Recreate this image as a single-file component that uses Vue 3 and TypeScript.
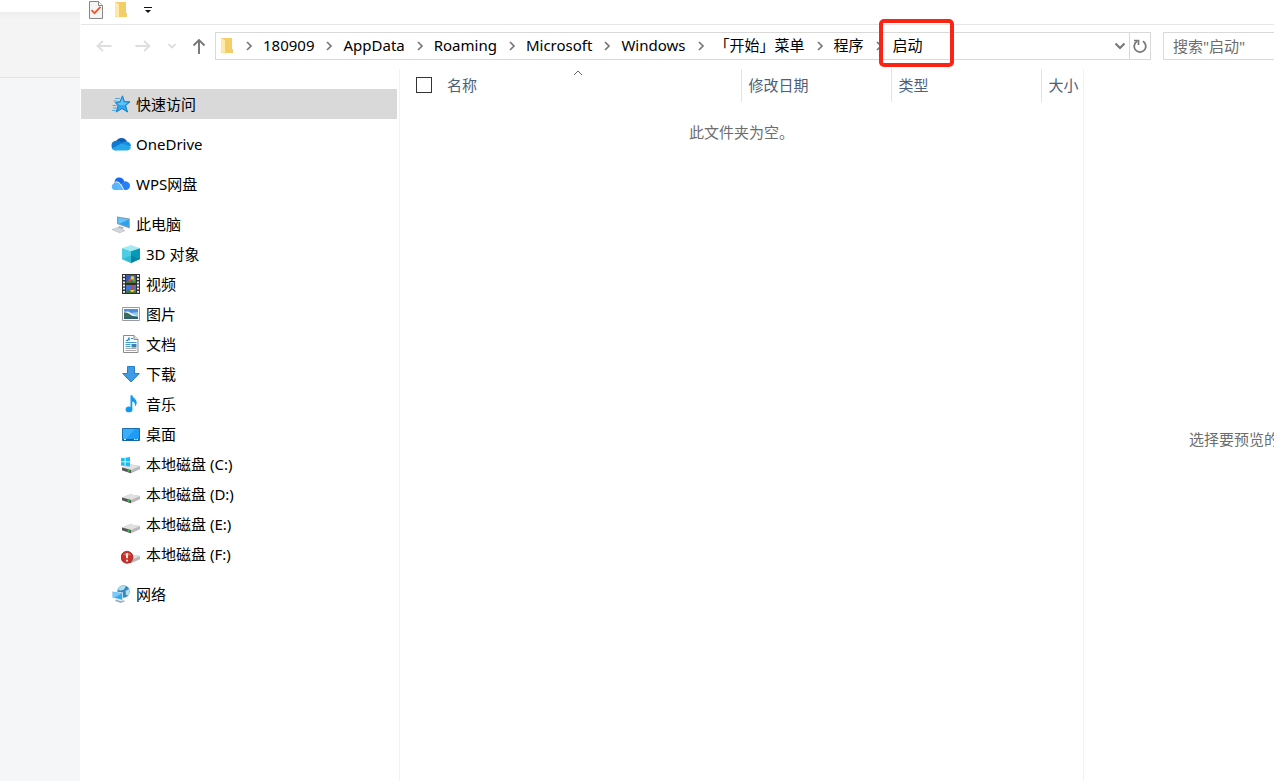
<script setup lang="ts">
import { ref } from 'vue'

type IconName =
  | 'star' | 'onedrive' | 'wps' | 'pc' | 'cube' | 'video' | 'picture' | 'document'
  | 'download' | 'music' | 'desktop' | 'systemDrive' | 'drive' | 'alertDrive' | 'network'

interface NavNode {
  label: string
  icon: IconName
  children?: NavNode[]
}

const nodes: NavNode[] = [
  { label: '快速访问', icon: 'star' },
  { label: 'OneDrive', icon: 'onedrive' },
  { label: 'WPS网盘', icon: 'wps' },
  {
    label: '此电脑',
    icon: 'pc',
    children: [
      { label: '3D 对象', icon: 'cube' },
      { label: '视频', icon: 'video' },
      { label: '图片', icon: 'picture' },
      { label: '文档', icon: 'document' },
      { label: '下载', icon: 'download' },
      { label: '音乐', icon: 'music' },
      { label: '桌面', icon: 'desktop' },
      { label: '本地磁盘 (C:)', icon: 'systemDrive' },
      { label: '本地磁盘 (D:)', icon: 'drive' },
      { label: '本地磁盘 (E:)', icon: 'drive' },
      { label: '本地磁盘 (F:)', icon: 'alertDrive' },
    ],
  },
  { label: '网络', icon: 'network' },
]

const driveArt = `
  <path d="M1 13.5 9 10.2 19 12v3.2l-9 4-9-3z" fill="#b9b9b9"/>
  <path d="M1 13.5 9 10.2 19 12l-9 4z" fill="#e0e0e0"/>
  <path d="M1 13.5 10 16V19.2l-9-3z" fill="#555"/>
  <path d="M6.5 16h2v1.6h-2z" fill="#35d04a"/>`

const art: Record<IconName, string> = {
  star: `
    <path d="M11.5 1.8 13.4 7.6 19 7.8 14.6 11.6 16.6 18 11 14.6 5.2 18 7 11.6 4.4 8.6 9 7.6z" fill="#2ba5ee" stroke="#1581c8" stroke-width="1"/>
    <path d="M11.4 4 12.6 8.4 16.6 8.6 13 11.2 8.4 11 6.6 9.2 9.8 8.5z" fill="#62c4fa"/>
    <path d="M4 4.5h5M2.5 7h4M1.5 11.5h4M2 14h3.5M1 16.5h3.5" stroke="#5aa9dc" stroke-width="1"/>`,
  onedrive: `
    <path d="M5.2 7A6.2 6.2 0 0 1 16 7.400L10 12z" fill="#0d5fb4"/>
    <path d="M4.600 16.400A4.900 4.900 0 0 1 4.800 6.700c2-.5 3.600.1 5 1.100L14 11 6 16z" fill="#1279d2"/>
    <path d="M10.400 10.600c1-2.600 3.200-3.600 5.400-3.200 2.600.4 4.200 2.500 4.200 4.600L14 13z" fill="#1690df"/>
    <path d="M.8 14.400 10.500 9.600 20 12.800c-.2 2.200-1.600 3.600-3.600 3.600H4.600c-1.600 0-3-.8-3.800-2z" fill="#28a8ea"/>`,
  wps: `
    <path d="M4 16C1.800 16 .8 14.500.8 12.700c0-2 1.400-3.300 3.200-3.400L9 16z" fill="#56b5fb"/>
    <path d="M3.600 9.200C3.300 5.400 5.400 3.400 8.200 3.400c2.900 0 4.800 1.800 5 4.400L7 13z" fill="#1769ee"/>
    <path d="M4.300 7.600c2-1 4 0 5.100 1.800l4.100 6.600H8.700L4 10z" fill="#5bb8fc"/>
    <path d="M10.200 9.800c.8-1.800 2.400-2.800 4.300-2.600 2.600.3 4.500 2 4.500 4.500S17.200 16 15 16h-2z" fill="#2b80f5"/>
    <path d="M4.300 8.200c2-.8 4 .4 5.100 2.200L13 16" fill="none" stroke="#fff" stroke-width=".8"/>`,
  pc: `
    <path d="M6 2.500 18.800 4.500V14.600L6 10z" fill="#8e9ba5"/>
    <path d="M7.200 3.800 17.800 5.500V13L7.200 9.400z" fill="#2ba2ef"/>
    <path d="M7.200 3.800 17.800 5.500 8.500 9.700 7.200 9.400z" fill="#68c3fa"/>
    <path d="M8 12 13 13.500 11.500 15 7 13.500z" fill="#a8b0b6"/>
    <path d="M1 15.500 7 13.600 14 16.600 8.500 18.800z" fill="#dbe0e4" stroke="#a9b1b7" stroke-width=".6"/>
    <path d="M3 15.600 9.400 18M5.400 14.800 12 17.400" stroke="#bec5ca" stroke-width=".6"/>`,
  cube: `
    <path d="M1 4.200 10 1 19 4.200 10 7.200z" fill="#a5e9f2"/>
    <path d="M1 4.200 10 7.200V19L1 15z" fill="#4ecce0"/>
    <path d="M19 4.200 10 7.200V19L19 15z" fill="#079ab8"/>
    <path d="M1 15 10 11.500V19z" fill="#35bcd5"/>
    <path d="M10 11.500 19 15 10 19z" fill="#0785a2"/>`,
  video: `
    <path d="M1 0h18v20H1z" fill="#303030"/>
    <path d="M5 1h10v8H5z" fill="#3558bd"/><path d="M5 11h10v8H5z" fill="#3f76dc"/>
    <path d="M5 7.500 9 6l6 2v1H5zM5 17l4-1 6 1v2H5z" fill="#47723a"/>
    <circle cx="11.500" cy="4" r="2" fill="#e6cf36"/><circle cx="9" cy="6" r="1.600" fill="#e04d35"/><circle cx="13" cy="6.400" r="1.400" fill="#54ad4a"/>
    <circle cx="11.500" cy="13.400" r="1.900" fill="#c84936"/><path d="M9 16h5l-2 2h-2z" fill="#e8ca3c"/>
    <path d="M3 1v18M17 1v18" stroke="#f2f2f2" stroke-width="2" stroke-dasharray="1.800 1.400"/>`,
  picture: `
    <path d="M1.500 3.500h17v13h-17z" fill="#fff" stroke="#9a9a9a"/>
    <path d="M3 5h14v10H3z" fill="#8ec7f1"/>
    <path d="M3 5h14v3L9 9 3 7z" fill="#4f8ed8"/>
    <path d="M4 8.500c2-1.500 4-1 6 .7l7 3.300H3V9z" fill="#f0f6fa"/>
    <path d="M3 8.600c3-.6 5 .8 8 3.200l6 1V15H3z" fill="#386b61"/>
    <path d="M3 13.500h14V15H3z" fill="#2c5a84"/>`,
  document: `
    <path d="M2.500 1.500H13l4 4v13H2.500z" fill="#fdfdfd" stroke="#8b8b8b"/>
    <path d="M13 1.500v4h4" fill="#e1e1e1" stroke="#8b8b8b"/>
    <path d="M5 6.500h1.600L8.200 3.500v3M10 4.500h2" fill="none" stroke="#258ed8" stroke-width="1.100"/>
    <path d="M4.500 8.500h11M4.500 10.500h5M4.500 12.500h5" stroke="#3d9fdd"/>
    <path d="M10.500 10h5v3.500h-5z" fill="#3f7fac"/>
    <path d="M4.500 14.500h11M4.500 16.500h11" stroke="#aaa"/>`,
  download: `<path d="M6.500 2.500h7v7h4.800L10 18 1.700 9.500h4.800z" fill="#3f9be6" stroke="#2580cc"/>`,
  music: `
    <path d="M9.500 1.200h1.800c.3 2.400 4.400 3.800 4.400 7.400 0 1.700-.8 2.900-1.800 4 .6-2.800-.4-4.500-2.600-5V15H9.500z" fill="#129af3"/>
    <ellipse cx="8" cy="15.400" rx="3.400" ry="2.900" fill="#129af3"/>`,
  desktop: `
    <path d="M1.500 4.500h17v12h-17z" fill="#1f9cf5" stroke="#166fae"/>
    <path d="M2 5h12L5 15H2z" fill="#3badfb"/>
    <path d="M2 15h16v1.500H2z" fill="#1b6094"/><path d="M3 15.500h2M13 15.500h1.500M15.500 15.500H17" stroke="#fff"/>`,
  systemDrive: `${driveArt}
    <path d="M0 4.300 3.700 3.800V7.500H0zM4.500 3.700 9 3.100V7.500H4.500zM0 8.300h3.700v3.700L0 11.500zM4.500 8.300H9v4.300l-4.500-.6z" fill="#19bdf3"/>`,
  drive: driveArt,
  alertDrive: `${driveArt}
    <circle cx="6" cy="13.300" r="6" fill="#c9302a" stroke="#9d2b27" stroke-width=".8"/>
    <path d="M2 10.800A5 5 0 0 1 10 10.800Q6 12.800 2 10.800" fill="#df6b5e"/>
    <path d="M6 9.300v5M6 15.800v1.800" stroke="#fff" stroke-width="1.700"/>`,
  network: `
    <circle cx="12.500" cy="7.500" r="6.200" fill="#3889bd"/>
    <path d="M8 3.400c2.400-2 5-2.300 7-1.600L13 5.400 10 6.500 7 6zM14.500 7l3.600-2c1 2.400.6 4.800-.6 6.600L15 11z" fill="#b5dfe8"/>
    <path d="M1 7 12 8.500V17L1 14z" fill="#dceaf3"/>
    <path d="M1.800 7.900 11.200 9.300V15.800L1.800 13.300z" fill="#36a9ed"/>
    <path d="M1.800 7.900 11.200 9.300 3.500 13.700 1.800 13.300z" fill="#79caf8"/>
    <path d="M5 15.600 10 17l3-.8.8 1.200L9.500 19 4 17z" fill="#9fb3bf"/>`,
}

const crumbs = ['180909', 'AppData', 'Roaming', 'Microsoft', 'Windows', '「开始」菜单', '程序', '启动']
const selected = ref('快速访问')
const query = ref('')
const allChecked = ref(false)
</script>

<template>
  <div class="screen">
    <div class="backdrop">
      <div class="backdrop-top"></div>
      <div class="backdrop-band"></div>
    </div>

    <div class="window">
      <div class="quickbar">
        <button class="plain" aria-label="属性">
          <svg width="16" height="20" viewBox="0 0 16 20">
            <path d="M1.500 1.500h9l4 4v13h-13z" fill="#f5f5f7" stroke="#858585" />
            <path d="M10.500 1.500v4h4" fill="#fff" stroke="#858585" />
            <path d="m3.500 10 3 3.200 6-6.400" fill="none" stroke="#f0561d" stroke-width="1.800" />
          </svg>
        </button>
        <button class="plain" aria-label="新建文件夹">
          <svg width="14" height="18" viewBox="0 0 14 18">
            <path d="M1 1h11v11h1v4H1z" fill="#f4cd6b" />
            <path d="M1 1l4 2v14.500L1 15z" fill="#ffe9a6" />
          </svg>
        </button>
        <button class="plain menu" aria-label="自定义快速访问工具栏">
          <svg width="8" height="8" viewBox="0 0 8 8"><path d="M0 1.500h8" stroke="#111" /><path d="M1 4h6L4 7z" fill="#111" /></svg>
        </button>
      </div>

      <div class="addressbar">
        <div class="history">
          <button class="plain" aria-label="后退" disabled>
            <svg width="16" height="14" viewBox="0 0 16 14"><path d="M15.500 7H1.500M7 2 1.500 7 7 12" fill="none" stroke="#dedede" stroke-width="1.800" /></svg>
          </button>
          <button class="plain" aria-label="前进" disabled>
            <svg width="16" height="14" viewBox="0 0 16 14"><path d="M.5 7h14M9 2l5.500 5L9 12" fill="none" stroke="#dedede" stroke-width="1.800" /></svg>
          </button>
          <button class="plain" aria-label="最近浏览的位置" disabled>
            <svg width="10" height="8" viewBox="0 0 10 8"><path d="m1.500 2 3.500 3.500L8.500 2" fill="none" stroke="#d8d8d8" stroke-width="1.600" /></svg>
          </button>
          <button class="plain" aria-label="上移">
            <svg width="14" height="16" viewBox="0 0 14 16"><path d="M7 16V2M1.500 7.500 7 2l5.500 5.500" fill="none" stroke="#767676" stroke-width="1.900" /></svg>
          </button>
        </div>
        <div class="path">
          <svg class="folder" width="14" height="18" viewBox="0 0 14 18">
            <path d="M1 1h11v11h1v4H1z" fill="#f4cd6b" />
            <path d="M1 1l4 2v14.500L1 15z" fill="#ffe9a6" />
          </svg>
          <nav class="crumbs" aria-label="地址">
            <template v-for="(crumb, i) in crumbs" :key="crumb">
              <svg class="sep" width="29" height="12" viewBox="0 0 29 12"><path d="m13 2 4 4-4 4" fill="none" stroke="#777" stroke-width="1.700" /></svg>
              <button class="plain crumb">
                {{ crumb }}<span v-if="i === crumbs.length - 1" class="marker"></span>
              </button>
            </template>
          </nav>
          <button class="plain drop" aria-label="以前的位置">
            <svg width="12" height="10" viewBox="0 0 12 10"><path d="m1.500 2.500 4.500 4.500 4.500-4.500" fill="none" stroke="#757575" stroke-width="2" /></svg>
          </button>
          <button class="plain refresh" aria-label="刷新">
            <svg width="16" height="16" viewBox="0 0 16 16">
              <path d="M11 3.300A5.800 5.800 0 1 1 5 3.300" fill="none" stroke="#777" stroke-width="1.800" />
              <path d="M2 2.500h4.500V7" fill="none" stroke="#777" stroke-width="1.700" />
            </svg>
          </button>
        </div>
        <input v-model="query" class="search" type="text" aria-label="搜索" placeholder="搜索&quot;启动&quot;" />
      </div>

      <div class="body">
        <nav class="tree" aria-label="导航窗格">
          <ul class="roots">
            <li v-for="node in nodes" :key="node.label">
              <button class="plain node" :class="{ active: selected === node.label }" @click="selected = node.label">
                <svg width="20" height="20" viewBox="0 0 20 20" v-html="art[node.icon]"></svg>{{ node.label }}
              </button>
              <ul v-if="node.children">
                <li v-for="child in node.children" :key="child.label">
                  <button class="plain node child" :class="{ active: selected === child.label }" @click="selected = child.label">
                    <svg width="20" height="20" viewBox="0 0 20 20" v-html="art[child.icon]"></svg>{{ child.label }}
                  </button>
                </li>
              </ul>
            </li>
          </ul>
        </nav>

        <main class="files">
          <table>
            <colgroup><col /><col class="mid" /><col class="mid" /><col class="last" /></colgroup>
            <thead>
              <tr>
                <th>
                  <div class="name-head">
                    <input v-model="allChecked" type="checkbox" aria-label="全选" />
                    <button class="plain">名称</button>
                    <svg class="caret" width="10" height="6" viewBox="0 0 10 6"><path d="m1 5 4-4 4 4" fill="none" stroke="#666" /></svg>
                  </div>
                </th>
                <th><button class="plain">修改日期</button></th>
                <th><button class="plain">类型</button></th>
                <th><button class="plain">大小</button></th>
              </tr>
            </thead>
            <tbody>
              <tr><td colspan="4">此文件夹为空。</td></tr>
            </tbody>
          </table>
        </main>

        <aside class="preview"><p>选择要预览的</p></aside>
      </div>
    </div>
  </div>
</template>

<style>
body {
  margin: 0;
}
</style>

<style scoped>
.screen {
  display: flex;
  min-height: 100vh;
  overflow: hidden;
  background: #fff;
  color: #000;
  font: 15px/20px "Noto Sans", "Noto Sans CJK SC", sans-serif;
}
.backdrop {
  flex: 0 0 80px;
  margin-right: 1px;
  background: #f5f6f8;
}
.backdrop-top {
  height: 12px;
  background: #fff;
}
.backdrop-band {
  height: 65px;
  border-bottom: 1px solid #e4e4e4;
  background: linear-gradient(#eee, #f4f4f4 8px);
}
.window {
  display: flex;
  flex: 1;
  flex-direction: column;
  min-width: 0;
}
.plain {
  padding: 0;
  border: 0;
  background: none;
  color: inherit;
  font: inherit;
  white-space: nowrap;
}
.plain svg {
  display: block;
}
.quickbar {
  display: flex;
  align-items: center;
  gap: 10px;
  height: 20px;
  padding: 0 7px 4px;
  border-bottom: 1px solid #e6e6e6;
}
.menu {
  margin-left: 6px;
}
.addressbar {
  display: flex;
  align-items: center;
  height: 42px;
  padding-bottom: 2px;
}
.history {
  display: flex;
  flex: 0 0 125px;
  align-items: center;
  justify-content: space-between;
  box-sizing: border-box;
  margin-right: 9px;
  padding-left: 15px;
}
.history .plain:nth-child(2) {
  margin-left: 8px;
}
.history .plain:nth-child(3) {
  margin-left: 2px;
}
.path {
  display: flex;
  flex: 1;
  align-items: center;
  box-sizing: border-box;
  height: 28px;
  min-width: 0;
  border: 1px solid #d9d9d9;
}
.folder {
  flex: none;
  margin-left: 4px;
}
.crumbs {
  display: flex;
  flex: 1;
  align-items: center;
  min-width: 0;
}
.sep {
  flex: none;
}
.crumb {
  position: relative;
  padding-bottom: 2px;
}
.marker {
  position: absolute;
  top: -16px;
  left: -14px;
  box-sizing: border-box;
  width: 75px;
  height: 48px;
  border: 4px solid #fb2314;
  border-radius: 5px;
}
.drop {
  padding: 0 3px;
}
.refresh {
  display: flex;
  align-items: center;
  justify-content: center;
  align-self: stretch;
  width: 21px;
  border-left: 1px solid #d9d9d9;
}
.search {
  flex: 0 0 111px;
  box-sizing: border-box;
  width: 111px;
  height: 28px;
  margin-left: 12px;
  padding: 0 0 0 9px;
  border: 1px solid #d9d9d9;
  border-right: 0;
  border-radius: 0;
  outline: none;
  background: #fff;
  font: inherit;
}
.search::placeholder {
  color: #6d6d6d;
  opacity: 1;
}
.body {
  display: flex;
  flex: 1;
}
.tree {
  flex: 0 0 316px;
  margin-right: 2px;
  padding-top: 20px;
}
.tree ul {
  margin: 0;
  padding: 0;
  list-style: none;
}
.tree .roots {
  display: flex;
  flex-direction: column;
  gap: 10px;
}
.node {
  display: flex;
  align-items: center;
  gap: 5px;
  width: 100%;
  height: 30px;
  padding-left: 30px;
  text-align: left;
}
.child {
  padding-left: 40px;
}
.active {
  background: #d9d9d9;
}
.files {
  flex: 1;
  min-width: 0;
  border-right: 1px solid #f2f2f2;
  border-left: 1px solid #f2f2f2;
}
table {
  width: 100%;
  border-collapse: collapse;
  table-layout: fixed;
}
.mid {
  width: 150px;
}
.last {
  width: 42px;
}
th {
  box-sizing: border-box;
  height: 33px;
  padding: 0 0 2px 7px;
  border-left: 1px solid #e3e3e3;
  color: #4c607a;
  font-weight: 400;
  text-align: left;
}
th:first-child {
  padding-left: 0;
  border-left: 0;
}
.name-head {
  position: relative;
  display: flex;
  align-items: center;
  gap: 15px;
  padding-left: 16px;
}
.name-head input {
  width: 16px;
  height: 16px;
  margin: 0;
  border: 1px solid #333;
  background: #fff;
  appearance: none;
}
.name-head input:checked {
  background: #2b88d8;
}
.caret {
  position: absolute;
  top: -5px;
  right: 158px;
}
td {
  padding: 20px 0;
  color: #6d6d6d;
  text-align: center;
}
.preview {
  flex: 0 0 190px;
  overflow: hidden;
  color: #6d6d6d;
}
.preview p {
  margin: 360px 0 0 105px;
  white-space: nowrap;
}
</style>
